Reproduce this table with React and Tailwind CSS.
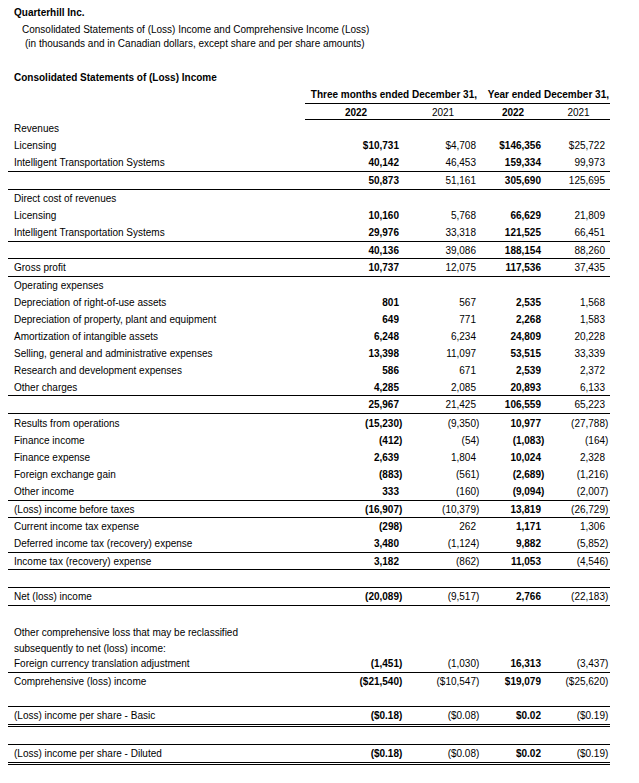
import React from "react";

const GRID = "grid grid-cols-[297px_97px_77px_65px_64px_2px]";

function Num({ v, bold }) {
  if (!v) return <div />;
  const paren = v.endsWith(")");
  const main = paren ? v.slice(0, -1) : v;
  return (
    <div className={`flex justify-end whitespace-nowrap ${bold ? "font-bold" : ""}`}>
      <span>{main}</span>
      <span className="w-[3px] shrink-0">{paren ? ")" : ""}</span>
    </div>
  );
}

function Row({ label, vals, h = 17 }) {
  const hc =
    h === 16 ? "h-[16px]" : h === 18 ? "h-[18px]" : "h-[17px]";
  return (
    <div className={`${GRID} ${hc} items-center leading-[17px]`}>
      <div className="pl-[6px] whitespace-nowrap">{label}</div>
      {vals ? (
        <>
          <Num v={vals[0]} bold />
          <Num v={vals[1]} />
          <Num v={vals[2]} bold />
          <Num v={vals[3]} />
        </>
      ) : (
        <>
          <div />
          <div />
          <div />
          <div />
        </>
      )}
      <div />
    </div>
  );
}

function Line() {
  return <div className="h-px bg-black" />;
}

function DoubleLine() {
  return (
    <div className="flex flex-col">
      <div className="h-px bg-black" />
      <div className="h-px" />
      <div className="h-px bg-black" />
    </div>
  );
}

const body = [
  { label: "Revenues" },
  { label: "Licensing", vals: ["$10,731", "$4,708", "$146,356", "$25,722"] },
  { label: "Intelligent Transportation Systems", vals: ["40,142", "46,453", "159,334", "99,973"] },
  { line: true },
  { label: "", vals: ["50,873", "51,161", "305,690", "125,695"] },
  { line: true },
  { label: "Direct cost of revenues" },
  { label: "Licensing", vals: ["10,160", "5,768", "66,629", "21,809"] },
  { label: "Intelligent Transportation Systems", vals: ["29,976", "33,318", "121,525", "66,451"] },
  { line: true },
  { label: "", vals: ["40,136", "39,086", "188,154", "88,260"], h: 16 },
  { line: true },
  { label: "Gross profit", vals: ["10,737", "12,075", "117,536", "37,435"] },
  { line: true },
  { label: "Operating expenses" },
  { label: "Depreciation of right-of-use assets", vals: ["801", "567", "2,535", "1,568"] },
  { label: "Depreciation of property, plant and equipment", vals: ["649", "771", "2,268", "1,583"] },
  { label: "Amortization of intangible assets", vals: ["6,248", "6,234", "24,809", "20,228"] },
  { label: "Selling, general and administrative expenses", vals: ["13,398", "11,097", "53,515", "33,339"] },
  { label: "Research and development expenses", vals: ["586", "671", "2,539", "2,372"] },
  { label: "Other charges", vals: ["4,285", "2,085", "20,893", "6,133"], h: 16 },
  { line: true },
  { label: "", vals: ["25,967", "21,425", "106,559", "65,223"] },
  { line: true },
  { label: "Results from operations", vals: ["(15,230)", "(9,350)", "10,977", "(27,788)"], h: 18 },
  { label: "Finance income", vals: ["(412)", "(54)", "(1,083)", "(164)"] },
  { label: "Finance expense", vals: ["2,639", "1,804", "10,024", "2,328"] },
  { label: "Foreign exchange gain", vals: ["(883)", "(561)", "(2,689)", "(1,216)"] },
  { label: "Other income", vals: ["333", "(160)", "(9,094)", "(2,007)"] },
  { line: true },
  { label: "(Loss) income before taxes", vals: ["(16,907)", "(10,379)", "13,819", "(26,729)"], h: 16 },
  { line: true },
  { label: "Current income tax expense", vals: ["(298)", "262", "1,171", "1,306"] },
  { label: "Deferred income tax (recovery) expense", vals: ["3,480", "(1,124)", "9,882", "(5,852)"] },
  { line: true },
  { label: "Income tax (recovery) expense", vals: ["3,182", "(862)", "11,053", "(4,546)"], h: 16 },
  { line: true },
  { label: "" },
  { line: true },
  { label: "Net (loss) income", vals: ["(20,089)", "(9,517)", "2,766", "(22,183)"] },
  { line: true },
  { label: "" },
  { multi: true },
  { label: "Foreign currency translation adjustment", vals: ["(1,451)", "(1,030)", "16,313", "(3,437)"] },
  { line: true },
  { label: "Comprehensive (loss) income", vals: ["($21,540)", "($10,547)", "$19,079", "($25,620)"] },
  { label: "", h: 16 },
  { line: true },
  { label: "(Loss) income per share - Basic", vals: ["($0.18)", "($0.08)", "$0.02", "($0.19)"] },
  { dbl: true },
  { label: "" },
  { line: true },
  { label: "(Loss) income per share - Diluted", vals: ["($0.18)", "($0.08)", "$0.02", "($0.19)"] },
  { dbl: true },
];

export default function App() {
  return (
    <div className="w-[639px] min-h-[783px] bg-white text-black text-[10px] font-['Liberation_Sans',Arial,sans-serif]">
      <div className="pt-[4px]">
        <div className="h-[17px] leading-[17px] pl-[14px] font-bold">Quarterhill Inc.</div>
        <div className="h-[14px] leading-[17px] pl-[22px]">
          Consolidated Statements of (Loss) Income and Comprehensive Income (Loss)
        </div>
        <div className="h-[17px] leading-[17px] pl-[25px]">
          (in thousands and in Canadian dollars, except share and per share amounts)
        </div>
        <div className="mt-[17px] h-[17px] leading-[17px] pl-[14px] font-bold">
          Consolidated Statements of (Loss) Income
        </div>
      </div>
      <div className="ml-[8px] w-[602px]">
        <div className="grid grid-cols-[297px_174px_131px] h-[17px] leading-[17px] font-bold whitespace-nowrap">
          <div />
          <div className="text-right pr-[2px]">Three months ended December 31,</div>
          <div className="text-right pr-[1px]">Year ended December 31,</div>
        </div>
        <div className="ml-[297px] h-px bg-black" />
        <div className={`${GRID} h-[15px] leading-[17px]`}>
          <div />
          <div className="text-center pl-[5px] font-bold">2022</div>
          <div className="text-center pl-[5px]">2021</div>
          <div className="text-center pl-[3px] font-bold">2022</div>
          <div className="text-center pl-[5px]">2021</div>
          <div />
        </div>
        <div className="ml-[297px] h-px bg-black" />
        {body.map((r, i) => {
          if (r.line) return <Line key={i} />;
          if (r.dbl) return <DoubleLine key={i} />;
          if (r.multi)
            return (
              <div key={i} className="h-[32px] pt-[2px] pl-[6px] leading-[15.5px]">
                <div>Other comprehensive loss that may be reclassified</div>
                <div>subsequently to net (loss) income:</div>
              </div>
            );
          return <Row key={i} label={r.label} vals={r.vals} h={r.h} />;
        })}
      </div>
    </div>
  );
}
